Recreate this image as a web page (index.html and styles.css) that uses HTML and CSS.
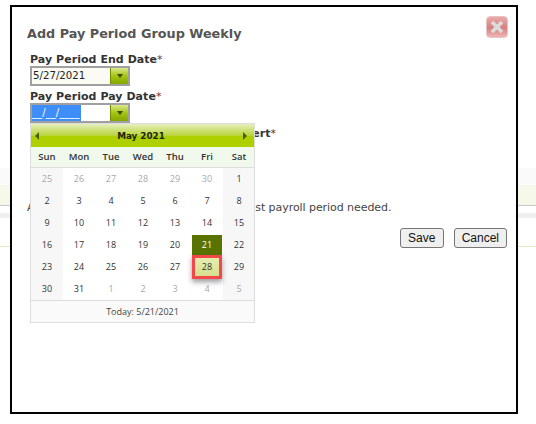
FILE: index.html
```html
<!DOCTYPE html>
<html lang="en">
<head>
  <meta charset="UTF-8" />
  <title>Add Pay Period Group</title>
  <link rel="stylesheet" href="styles.css">
</head>
<body>

  <!-- Page behind the dialog -->
  <div class="backdrop">
    <div class="strip-light"></div>
    <div class="strip-green"></div>
    <div class="strip-gray"></div>
    <div class="strip-line"></div>
  </div>

  <!-- Dialog -->
  <div class="dialog">
    <button class="close-btn" aria-label="Close">
      <svg width="16" height="16" viewBox="0 0 16 16">
        <path d="M3 3 L13 13 M13 3 L3 13" stroke="#dcdcdc" stroke-width="3.8" fill="none" />
      </svg>
    </button>

    <h1 class="dialog-title">Add Pay Period Group Weekly</h1>

    <div class="field">
      <label class="field-label">Pay Period End Date<span class="req">*</span></label>
      <div class="date-input filled">
        <span class="date-text">5/27/2021</span>
        <span class="date-btn"><span class="arrow-down"></span></span>
      </div>
    </div>

    <div class="field">
      <label class="field-label">Pay Period Pay Date<span class="req">*</span></label>
      <div class="date-input">
        <span class="date-text selected">__/__/____</span>
        <span class="date-btn"><span class="arrow-down"></span></span>
      </div>
    </div>

    <div class="field">
      <label class="field-label">Pay Period Submission Reminder Alert<span class="req">*</span></label>
    </div>

    <p class="note">Add pay periods through the end of the last payroll period needed.</p>

    <div class="actions">
      <button class="btn">Save</button>
      <button class="btn">Cancel</button>
    </div>

    <!-- Calendar popup -->
    <div class="calendar">
      <div class="cal-head">
        <span class="cal-prev"></span>
        <span class="cal-month">May 2021</span>
        <span class="cal-next"></span>
      </div>
      <div class="cal-grid cal-days">
        <span>Sun</span><span>Mon</span><span>Tue</span><span>Wed</span><span>Thu</span><span>Fri</span><span>Sat</span>
      </div>
      <div class="cal-grid cal-dates">
        <span class="wk other">25</span><span class="other">26</span><span class="other">27</span><span class="other">28</span><span class="other">29</span><span class="other">30</span><span class="wk">1</span>
        <span class="wk">2</span><span>3</span><span>4</span><span>5</span><span>6</span><span>7</span><span class="wk">8</span>
        <span class="wk">9</span><span>10</span><span>11</span><span>12</span><span>13</span><span>14</span><span class="wk">15</span>
        <span class="wk">16</span><span>17</span><span>18</span><span>19</span><span>20</span><span class="today">21</span><span class="wk">22</span>
        <span class="wk">23</span><span>24</span><span>25</span><span>26</span><span>27</span><span class="picked">28</span><span class="wk">29</span>
        <span class="wk">30</span><span>31</span><span class="other">1</span><span class="other">2</span><span class="other">3</span><span class="other">4</span><span class="wk other">5</span>
      </div>
      <div class="cal-foot">Today: 5/21/2021</div>
    </div>
  </div>

</body>
</html>
```
FILE: styles.css
```css
/* Global */
html, body {
  margin: 0;
  height: 424px;
  overflow: hidden;
  background: #ffffff;
  font-family: "DejaVu Sans", Verdana, sans-serif;
}
/* Page behind the dialog */
.backdrop {
  padding-top: 168px;
}
.strip-light {
  height: 17px;
  background: #fafafa;
}
.strip-green {
  height: 20px;
  background: #f6f9ea;
  border-bottom: 1px solid #c8c8c8;
}
.strip-gray {
  height: 5px;
  margin-top: 7px;
  background: #f0f0f0;
}
.strip-line {
  height: 1px;
  margin-top: 28px;
  background: #dfe8c4;
}
/* Dialog */
.dialog {
  position: absolute;
  left: 10px;
  top: 5px;
  width: 504px;
  height: 405px;
  border: 2px solid #000000;
  background: #ffffff;
}
.dialog-title {
  margin: 0;
  padding: 19px 0 0 15px;
  font-size: 12.8px;
  line-height: 16px;
  font-weight: bold;
  color: #555555;
}
.close-btn {
  position: absolute;
  left: 474px;
  top: 9px;
  width: 22px;
  height: 22px;
  padding: 0;
  display: flex;
  align-items: center;
  justify-content: center;
  border: 1px solid #e6c4c4;
  border-radius: 4px;
  background: linear-gradient(#eba9a9, #d87f7f 55%, #efb4b4);
}
/* Form fields */
.field {
  margin-left: 18px;
}
.dialog-title + .field {
  margin-top: 10px;
}
.field + .field {
  margin-top: 3px;
}
.field-label {
  display: block;
  margin-bottom: -2px;
  font-size: 11px;
  line-height: 16px;
  letter-spacing: 0.05px;
  font-weight: bold;
  color: #333333;
  white-space: nowrap;
}
.req {
  font-weight: normal;
  color: #6b3030;
}
.date-input {
  display: flex;
  justify-content: space-between;
  width: 96px;
  height: 16px;
  border: 2px solid #a0a0a0;
  background: #ffffff;
}
.date-input.filled {
  background: #fbfbf3;
}
.date-text {
  font-size: 10.2px;
  line-height: 16px;
  padding: 0 1px;
  color: #222222;
}
.date-text.selected {
  width: 49px;
  padding: 0;
  background: #3d8ef8;
  color: #ffffff;
}
.date-btn {
  display: flex;
  align-items: center;
  justify-content: center;
  width: 17px;
  border-left: 1px solid #6f8f00;
  background: linear-gradient(#dce88a, #a4c414 50%, #84a800);
}
.arrow-down {
  width: 0;
  height: 0;
  border-left: 3px solid transparent;
  border-right: 3px solid transparent;
  border-top: 4px solid #3c4a00;
}
.note {
  margin: 61px 0 0 15px;
  font-size: 11px;
  line-height: 14px;
  letter-spacing: -0.06px;
  color: #444444;
  white-space: nowrap;
}
.actions {
  display: flex;
  justify-content: flex-end;
  gap: 10px;
  margin: 13px 9px 0 0;
}
.btn {
  height: 20px;
  min-width: 44px;
  padding: 0 7px;
  border: 1px solid #767676;
  border-radius: 3px;
  background: #efefef;
  font-family: "Liberation Sans", Arial, sans-serif;
  font-size: 12px;
  color: #111111;
}
/* Calendar popup */
.calendar {
  position: absolute;
  left: 18px;
  top: 116px;
  width: 223px;
  border: 1px solid #dddddd;
  background: #ffffff;
  color: #333333;
  font-family: "Open Sans", sans-serif;
  overflow: hidden;
}
.cal-head {
  display: flex;
  align-items: center;
  justify-content: space-between;
  height: 23px;
  padding: 0 7px 0 4px;
  background: linear-gradient(#e6efbe, #b9d43a 50%, #aecf00 52%);
}
.cal-month {
  font-family: "DejaVu Sans", sans-serif;
  font-size: 8.8px;
  font-weight: bold;
  color: #1c2400;
}
.cal-prev, .cal-next {
  width: 0;
  height: 0;
  border-top: 4px solid transparent;
  border-bottom: 4px solid transparent;
}
.cal-prev {
  border-right: 4px solid #4a6000;
}
.cal-next {
  border-left: 4px solid #4a6000;
}
.cal-grid {
  display: grid;
  grid-template-columns: repeat(7, 32px);
  text-align: center;
  font-size: 9px;
}
.cal-days {
  height: 21px;
  line-height: 20px;
  font-size: 9.5px;
  font-weight: 600;
  background: #f1f9ec;
  border-bottom: 1px solid #dddddd;
  box-sizing: border-box;
  color: #333333;
}
.cal-dates {
  grid-auto-rows: 22px;
  line-height: 22px;
}
.cal-dates .wk {
  background: #f7f7f7;
}
.cal-dates .other {
  color: #a8a8a8;
}
.cal-dates .today {
  margin: 1px;
  line-height: 20px;
  background: #597300;
  color: #ffffff;
}
/* highlight drawn over the cell on the screenshot */
.cal-dates .picked {
  position: relative;
  margin: -1px 1px;
  border: 3px solid #f4474a;
  line-height: 18px;
  background: linear-gradient(#e6eeb0, #d6e08e);
  box-shadow: 0 3px 5px rgba(60, 60, 60, 0.5);
}
.cal-foot {
  height: 22px;
  line-height: 21px;
  text-align: center;
  font-size: 9px;
  border-top: 1px solid #dddddd;
  background: #fafafa;
  box-sizing: border-box;
  color: #444444;
}
```
